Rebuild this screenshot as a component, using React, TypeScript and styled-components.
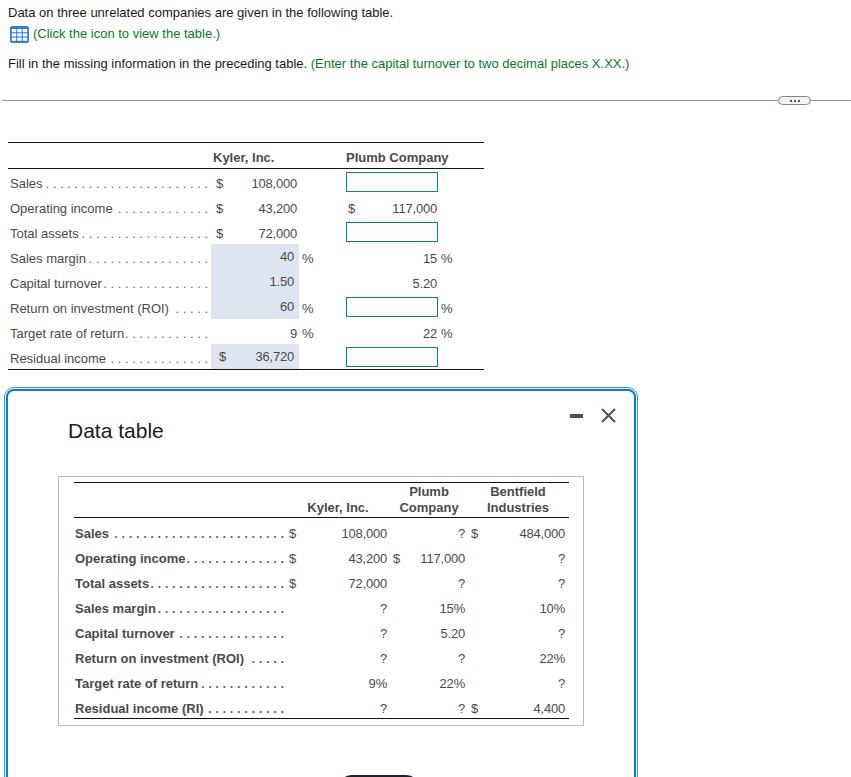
import React from 'react';
import styled, { createGlobalStyle } from 'styled-components';

const GlobalStyle = createGlobalStyle`
  html, body {
    margin: 0;
    padding: 0;
    height: 777px;
    overflow: hidden;
    background: #fff;
    font-family: "Liberation Sans", Arial, sans-serif;
  }
`;

const Page = styled.div`
  width: 851px;
  height: 777px;
  overflow: hidden;
  box-sizing: border-box;
  padding-top: 5px;
`;

const Intro = styled.div`
  padding-left: 8px;
  font-size: 13px;
  line-height: 16px;
  color: #1a1a1a;
`;

const IconLine = styled.div`
  display: flex;
  align-items: center;
  gap: 4px;
  margin-top: 3px;
  padding-left: 2px;
  height: 20px;
`;

const Hint = styled.span`
  color: #0b7a20;
`;

const Instruction = styled.div`
  margin-top: 12px;
`;

const Divider = styled.div`
  margin: 28px 0 0 2px;
  height: 1px;
  background: #8d93a6;
  display: flex;
  justify-content: flex-end;
  align-items: center;
  padding-right: 40px;
`;

const MorePill = styled.div`
  width: 31px;
  height: 7px;
  border: 1px solid #7d8494;
  border-radius: 5px;
  background: #f4f5f8;
  display: flex;
  align-items: center;
  justify-content: center;
  gap: 2px;
`;

const PillDot = styled.span`
  width: 2px;
  height: 2px;
  background: #4c5260;
`;

const CompanyTable = styled.div`
  margin: 41px 0 0 8px;
  width: 476px;
  border-top: 1px solid #111;
  border-bottom: 1px solid #111;
  font-size: 13px;
  color: #4a4a4a;
`;

const CompanyRow = styled.div<{ $head?: boolean }>`
  display: grid;
  grid-template-columns: 203px 88px 47px 92px 46px;
  height: 25px;
  align-items: stretch;
  ${p => p.$head && 'border-bottom: 1px solid #111; font-weight: bold;'}
`;

const Label = styled.div`
  display: flex;
  align-items: center;
  justify-content: space-between;
  padding: 3px 3px 0 2px;
  overflow: hidden;
  white-space: nowrap;
`;

const Leader = styled.span`
  color: #666;
`;

const ValueCell = styled.div<{ $shaded?: boolean }>`
  display: flex;
  align-items: center;
  justify-content: space-between;
  padding: ${p => (p.$shaded ? '0 5px 0 8px' : '3px 2px 0 5px')};
  background: ${p => (p.$shaded ? '#dfe5f0' : 'transparent')};
`;

const NumberText = styled.span`
  margin-left: auto;
  letter-spacing: -0.2px;
`;

const HeadCell = styled.div<{ $pad?: number }>`
  display: flex;
  align-items: center;
  white-space: nowrap;
  padding: 3px 0 0 ${p => p.$pad ?? 0}px;
`;

const PercentCell = styled.div`
  display: flex;
  align-items: center;
  padding: 3px 0 0 3px;
`;

const PlumbCell = styled.div`
  display: flex;
  align-items: center;
  justify-content: space-between;
  padding: 3px 1px 0 2px;
`;

const AnswerBox = styled.div`
  width: 92px;
  height: 20px;
  margin: -2px -1px 0 -2px;
  flex-shrink: 0;
  box-sizing: border-box;
  border: 1px solid #0e7c9b;
  background: #fff;
`;

const DialogWindow = styled.div`
  margin: 17px 0 0 4px;
  width: 634px;
  height: 420px;
  box-sizing: border-box;
  border: 1px solid #2a9de0;
  border-radius: 10px;
  padding: 1px;
  background: #fff;
`;

const DialogInner = styled.div`
  height: 100%;
  box-sizing: border-box;
  border: 2px solid #0f78c9;
  border-radius: 8px;
  position: relative;
  padding: 28px 0 0 60px;
`;

const DialogHeader = styled.div`
  display: flex;
  justify-content: space-between;
  align-items: center;
  height: 24px;
`;

const DialogTitle = styled.div`
  font-size: 21px;
  color: #1a1a1a;
`;

const WindowControls = styled.div`
  display: flex;
  align-items: center;
  gap: 18px;
  padding-right: 18px;
  margin-top: -31px;
`;

const MinimizeBar = styled.div`
  width: 13px;
  height: 4px;
  background: #4d4d4d;
`;

const TableFrame = styled.div`
  margin: 33px 0 0 -10px;
  width: 526px;
  height: 250px;
  box-sizing: border-box;
  border: 1px solid #bcbcbc;
  padding: 5px 14px 0 15px;
`;

const DataGrid = styled.div`
  border-top: 1px solid #111;
  border-bottom: 1px solid #111;
  font-size: 13px;
  color: #4a4a4a;
`;

const DataHead = styled.div`
  display: grid;
  grid-template-columns: 212px 104px 78px 100px;
  height: 34px;
  border-bottom: 1px solid #111;
  font-weight: bold;
  line-height: 16px;
  align-items: end;
  text-align: center;
`;

const HeadLabel = styled.div`
  margin-bottom: 1px;
`;

const DataRow = styled.div`
  display: grid;
  grid-template-columns: 212px 104px 78px 100px;
  height: 25px;
  align-items: center;
  padding-top: 5px;
  box-sizing: border-box;
`;

const DataLabel = styled.div`
  display: flex;
  justify-content: space-between;
  padding: 0 2px 0 1px;
  white-space: nowrap;
  font-weight: bold;
  overflow: hidden;
`;

const DataValue = styled.div`
  display: flex;
  justify-content: space-between;
  padding: 0 3px;
`;

const BottomButton = styled.div`
  position: absolute;
  left: 330px;
  top: 384px;
  width: 82px;
  height: 30px;
  border-radius: 14px;
  background: #1c2030;
`;

const dots = (n: number) => Array(n).fill('.').join(' ');

const companyRows = [
  { label: 'Sales', n: 23, dollar: true, value: '108,000' },
  { label: 'Operating income', n: 13, dollar: true, value: '43,200', plumbDollar: true, plumb: '117,000' },
  { label: 'Total assets', n: 18, dollar: true, value: '72,000' },
  { label: 'Sales margin', n: 17, value: '40', shaded: true, pct: true, plumb: '15', plumbPct: true },
  { label: 'Capital turnover', n: 15, value: '1.50', shaded: true, plumb: '5.20' },
  { label: 'Return on investment (ROI)', n: 5, value: '60', shaded: true, pct: true, plumbPct: true },
  { label: 'Target rate of return', n: 12, value: '9', pct: true, plumb: '22', plumbPct: true },
  { label: 'Residual income', n: 14, dollar: true, value: '36,720', shaded: true },
];

const dataRows = [
  { label: 'Sales', n: 24, a: '108,000', aD: true, b: '?', c: '484,000', cD: true },
  { label: 'Operating income', n: 14, a: '43,200', aD: true, b: '117,000', bD: true, c: '?' },
  { label: 'Total assets', n: 19, a: '72,000', aD: true, b: '?', c: '?' },
  { label: 'Sales margin', n: 18, a: '?', b: '15%', c: '10%' },
  { label: 'Capital turnover', n: 15, a: '?', b: '5.20', c: '?' },
  { label: 'Return on investment (ROI)', n: 5, a: '?', b: '?', c: '22%' },
  { label: 'Target rate of return', n: 12, a: '9%', b: '22%', c: '?' },
  { label: 'Residual income (RI)', n: 11, a: '?', b: '?', c: '4,400', cD: true },
];

const iconCols = [1.8, 7.3, 12.8];
const iconRows = [3, 7.3, 11.6];

const TableIcon = () => (
  <svg width="19" height="17" viewBox="0 0 19 17">
    <rect width="19" height="17" rx="2" fill="#2f7fe0" />
    <g fill="#fff">
      {iconRows.map(y =>
        iconCols.map(x => <rect key={`${x}-${y}`} x={x} y={y} width="4.4" height="3.2" />)
      )}
    </g>
  </svg>
);

const CloseIcon = () => (
  <svg width="15" height="15" viewBox="0 0 15 15">
    <path d="M1 1 L14 14 M14 1 L1 14" stroke="#4a5361" strokeWidth="2" fill="none" />
  </svg>
);

export default function App() {
  return (
    <Page>
      <GlobalStyle />
      <Intro>
        <div>Data on three unrelated companies are given in the following table.</div>
        <IconLine>
          <TableIcon />
          <Hint>(Click the icon to view the table.)</Hint>
        </IconLine>
        <Instruction>
          Fill in the missing information in the preceding table.{' '}
          <Hint>(Enter the capital turnover to two decimal places X.XX.)</Hint>
        </Instruction>
      </Intro>
      <Divider>
        <MorePill>
          <PillDot />
          <PillDot />
          <PillDot />
        </MorePill>
      </Divider>

      <CompanyTable>
        <CompanyRow $head>
          <div />
          <HeadCell $pad={2}>Kyler, Inc.</HeadCell>
          <div />
          <HeadCell>Plumb Company</HeadCell>
          <div />
        </CompanyRow>
        {companyRows.map(r => (
          <CompanyRow key={r.label}>
            <Label>
              <span>{r.label}</span>
              <Leader>{dots(r.n)}</Leader>
            </Label>
            <ValueCell $shaded={r.shaded}>
              {r.dollar && <span>$</span>}
              <NumberText>{r.value}</NumberText>
            </ValueCell>
            <PercentCell>{r.pct && '%'}</PercentCell>
            <PlumbCell>
              {r.plumb ? (
                <>
                  {r.plumbDollar && <span>$</span>}
                  <NumberText>{r.plumb}</NumberText>
                </>
              ) : (
                <AnswerBox />
              )}
            </PlumbCell>
            <PercentCell>{r.plumbPct && '%'}</PercentCell>
          </CompanyRow>
        ))}
      </CompanyTable>

      <DialogWindow>
        <DialogInner>
          <DialogHeader>
            <DialogTitle>Data table</DialogTitle>
            <WindowControls>
              <MinimizeBar />
              <CloseIcon />
            </WindowControls>
          </DialogHeader>
          <TableFrame>
            <DataGrid>
              <DataHead>
                <div />
                <HeadLabel>Kyler, Inc.</HeadLabel>
                <HeadLabel>
                  Plumb
                  <br />
                  Company
                </HeadLabel>
                <HeadLabel>
                  Bentfield
                  <br />
                  Industries
                </HeadLabel>
              </DataHead>
              {dataRows.map(r => (
                <DataRow key={r.label}>
                  <DataLabel>
                    <span>{r.label}</span>
                    <Leader>{dots(r.n)}</Leader>
                  </DataLabel>
                  <DataValue>
                    {r.aD && <span>$</span>}
                    <NumberText>{r.a}</NumberText>
                  </DataValue>
                  <DataValue>
                    {r.bD && <span>$</span>}
                    <NumberText>{r.b}</NumberText>
                  </DataValue>
                  <DataValue>
                    {r.cD && <span>$</span>}
                    <NumberText>{r.c}</NumberText>
                  </DataValue>
                </DataRow>
              ))}
            </DataGrid>
          </TableFrame>
          <BottomButton />
        </DialogInner>
      </DialogWindow>
    </Page>
  );
}
